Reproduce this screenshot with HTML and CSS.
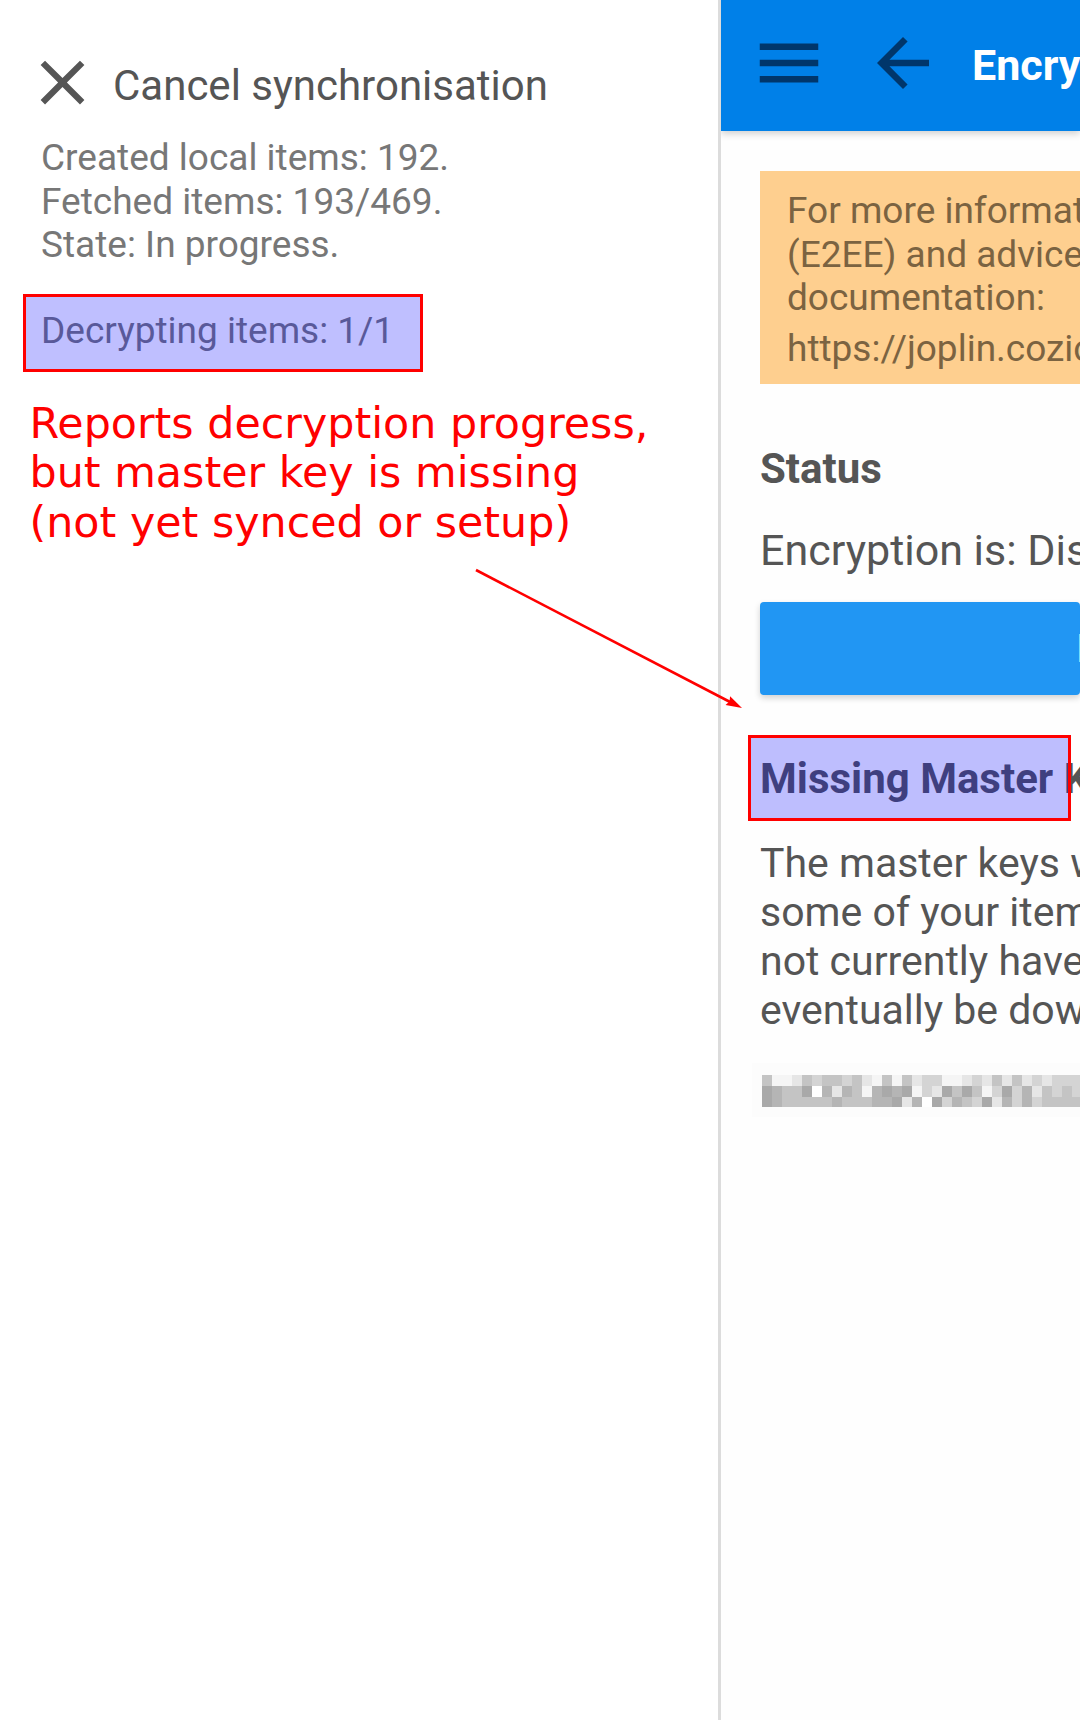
FILE: index.html
```html
<!DOCTYPE html>
<html lang="en">
<head>
<meta charset="utf-8">
<title>Joplin – decryption progress</title>
<link rel="stylesheet" href="styles.css">
</head>
<body>
<div class="screen">
  <section class="sidebar">
    <div class="cancel-row">
      <svg class="icon-close" viewBox="0 0 24 24" aria-hidden="true"><path d="M19 6.41L17.59 5 12 10.59 6.41 5 5 6.41 10.59 12 5 17.59 6.41 19 12 13.41 17.59 19 19 17.59 13.41 12z"/></svg>
      <span class="cancel-label">Cancel synchronisation</span>
    </div>
    <div class="sync-status">
      <div>Created local items: 192.</div>
      <div>Fetched items: 193/469.</div>
      <div>State: In progress.</div>
    </div>
    <div class="decrypt-box">Decrypting items: 1/1</div>
    <p class="note">Reports decryption progress,<br>but master key is missing<br>(not yet synced or setup)</p>
  </section>

  <section class="main">
    <header class="appbar">
      <svg class="icon-bar" viewBox="0 0 24 24" aria-hidden="true"><path d="M3 18h18v-2H3v2zm0-5h18v-2H3v2zm0-7v2h18V6H3z"/></svg>
      <svg class="icon-bar back" viewBox="0 0 24 24" aria-hidden="true"><path d="M20 11H7.83l5.59-5.59L12 4l-8 8 8 8 1.41-1.41L7.830 13H20v-2z"/></svg>
      <h1 class="appbar-title">Encryption Config</h1>
    </header>

    <div class="content">
      <div class="info-box">
        <div class="info-line">For more information about End-To-End Encryption</div>
        <div class="info-line">(E2EE) and advice on how to enable it please check the</div>
        <div class="info-line">documentation:</div>
        <div class="info-line info-link">https://joplin.cozic.net/e2ee/</div>
      </div>

      <h2 class="section-title">Status</h2>
      <div class="status-line">Encryption is: Disabled</div>
      <div class="btn-primary">ENABLE</div>

      <div class="missing-wrap">
        <h2 class="missing-title">Missing Master Keys</h2>
        <div class="highlight"></div>
      </div>
      <div class="body-text">
        <div>The master keys with these IDs are used to encrypt</div>
        <div>some of your items, however the application does</div>
        <div>not currently have access to them. It is likely they will</div>
        <div>eventually be downloaded via synchronisation.</div>
      </div>

      <div class="pixelated">
        <div class="pix-grid">
          <i class="c"></i><i class="f"></i><i class="f"></i><i class="e"></i><i class="c"></i><i class="d"></i><i class="c"></i><i class="c"></i><i class="d"></i><i class="c"></i><i class="e"></i><i class="f"></i><i class="c"></i><i class="f"></i><i class="c"></i><i class="e"></i><i class="d"></i><i class="d"></i><i class="f"></i><i class="f"></i><i class="e"></i><i class="d"></i><i class="e"></i><i class="c"></i><i class="e"></i><i class="c"></i><i class="e"></i><i class="d"></i><i class="e"></i><i class="d"></i><i class="d"></i><i class="d"></i>
          <i class="a"></i><i class="b"></i><i class="c"></i><i class="c"></i><i class="a"></i><i class="w"></i><i class="b"></i><i class="e"></i><i class="b"></i><i class="c"></i><i class="f"></i><i class="b"></i><i class="a"></i><i class="b"></i><i class="a"></i><i class="f"></i><i class="d"></i><i class="e"></i><i class="a"></i><i class="c"></i><i class="a"></i><i class="c"></i><i class="f"></i><i class="d"></i><i class="a"></i><i class="d"></i><i class="b"></i><i class="e"></i><i class="c"></i><i class="d"></i><i class="c"></i><i class="d"></i>
          <i class="a"></i><i class="b"></i><i class="c"></i><i class="c"></i><i class="c"></i><i class="c"></i><i class="c"></i><i class="b"></i><i class="c"></i><i class="c"></i><i class="c"></i><i class="b"></i><i class="b"></i><i class="a"></i><i class="e"></i><i class="b"></i><i class="w"></i><i class="a"></i><i class="d"></i><i class="b"></i><i class="c"></i><i class="d"></i><i class="a"></i><i class="e"></i><i class="b"></i><i class="d"></i><i class="b"></i><i class="d"></i><i class="c"></i><i class="c"></i><i class="c"></i><i class="c"></i>
        </div>
      </div>
    </div>
  </section>

  <svg class="pointer" viewBox="0 0 1080 1720" aria-hidden="true">
    <line x1="476" y1="570" x2="732" y2="703" />
    <polygon points="742,708 725.5,705 729.5,701.5 730.1,696.2" />
  </svg>
</div>
</body>
</html>
```

FILE: styles.css
```css
html, body {
  margin: 0;
  padding: 0;
  background: #ffffff;
}

.screen {
  position: relative;
  display: flex;
  width: 1080px;
  height: 1720px;
  overflow: hidden;
  font-family: Roboto, "Noto Sans", sans-serif;
}

/* ---------- left: sync sidebar ---------- */
.sidebar {
  flex: 0 0 718px;
  background: #ffffff;
}

.cancel-row {
  display: flex;
  align-items: flex-start;
  padding-top: 45px;
}

.icon-close {
  width: 75px;
  height: 75px;
  margin-left: 25px;
  fill: #555555;
  flex: none;
}

.cancel-label {
  margin-top: 16px;
  margin-left: 13px;
  font-size: 42px;
  line-height: normal;
  color: #555555;
  white-space: nowrap;
}

.sync-status {
  margin-top: 16px;
  margin-left: 41px;
  font-size: 37px;
  line-height: 43.5px;
  color: #777777;
}

.decrypt-box {
  box-sizing: border-box;
  width: 400px;
  margin: 27px 0 0 23px;
  padding: 12px 0 17px 15px;
  border: 3px solid #ff0000;
  background: #bfbfff;
  color: #59599a;
  font-size: 37px;
  line-height: 43.5px;
  white-space: nowrap;
}

.note {
  margin: 27px 0 0 29.5px;
  font-family: "DejaVu Sans", sans-serif;
  font-size: 42.8px;
  line-height: 49.4px;
  color: #ff0000;
  white-space: nowrap;
}

/* ---------- right: encryption screen ---------- */
.main {
  flex: 0 0 359px;
  border-left: 3px solid #dcdcdc;
  background: #fefefe;
  overflow: hidden;
}

.appbar {
  position: relative;
  z-index: 1;
  display: flex;
  align-items: center;
  height: 126px;
  padding: 0 0 5px 29px;
  background: #0080e8;
  box-shadow: 0 3px 7px rgba(0, 0, 0, 0.18);
  white-space: nowrap;
}

.icon-bar {
  width: 78px;
  height: 78px;
  flex: none;
  fill: #00366b;
}

.icon-bar.back {
  margin-left: 36px;
}

.appbar-title {
  margin: 4px 0 0 30px;
  font-size: 43px;
  font-weight: 700;
  color: #ffffff;
}

.content {
  padding: 40px 0 0 39px;
}

.info-box {
  padding: 18px 0 13.5px 27px;
  background: #fecf8f;
  color: #7b6341;
  font-size: 37px;
  line-height: 43.5px;
  white-space: nowrap;
}

.info-link {
  margin-top: 7px;
}

.section-title {
  margin: 60px 0 0;
  font-size: 42px;
  font-weight: 700;
  line-height: normal;
  color: #555555;
}

.status-line {
  margin-top: 33.5px;
  font-size: 43px;
  line-height: 49px;
  color: #555555;
  white-space: nowrap;
}

.btn-primary {
  display: flex;
  align-items: center;
  height: 93px;
  margin-top: 27px;
  padding-left: 317px;
  border-radius: 4px;
  background: #2196f3;
  box-shadow: 0 3px 6px rgba(0, 0, 0, 0.18);
  color: #ffffff;
  font-size: 38px;
  font-weight: 700;
  white-space: nowrap;
}

.missing-wrap {
  position: relative;
  margin-top: 60px;
}

.missing-title {
  margin: 0;
  font-size: 42px;
  font-weight: 700;
  line-height: 48px;
  color: #555555;
  white-space: nowrap;
}

.highlight {
  position: absolute;
  left: -12px;
  top: -20px;
  box-sizing: border-box;
  width: 323px;
  height: 86px;
  border: 3px solid #ff0000;
  background: rgba(0, 0, 255, 0.25);
}

.body-text {
  margin-top: 35.5px;
  font-size: 41px;
  line-height: 49px;
  color: #555555;
  white-space: nowrap;
}

.pixelated {
  margin: 28px 0 0 -8px;
  padding: 12px 0 10px 10px;
  background: #fcfcfc;
}

.pix-grid {
  display: grid;
  grid-template-columns: repeat(32, 10px);
  grid-template-rows: 11px 11px 10px;
}

.pix-grid i { display: block; }
.pix-grid .a { background: #a9a9a9; }
.pix-grid .b { background: #b5b5b5; }
.pix-grid .c { background: #c4c4c4; }
.pix-grid .d { background: #d4d4d4; }
.pix-grid .e { background: #e6e6e6; }
.pix-grid .f { background: #f5f5f5; }
.pix-grid .w { background: #ffffff; }

/* ---------- annotation arrow ---------- */
.pointer {
  position: absolute;
  left: 0;
  top: 0;
  width: 1080px;
  height: 1720px;
  pointer-events: none;
}

.pointer line {
  stroke: #ff0000;
  stroke-width: 2.6;
}

.pointer polygon {
  fill: #ff0000;
}
```
